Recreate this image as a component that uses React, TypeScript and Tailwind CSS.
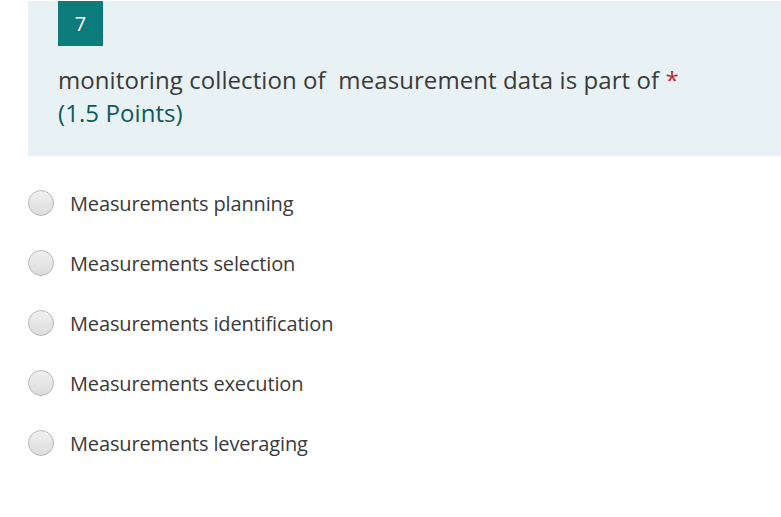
import React from "react";

const options = [
  "Measurements planning",
  "Measurements selection",
  "Measurements identification",
  "Measurements execution",
  "Measurements leveraging",
];

export default function App() {
  return (
    <div
      className="w-[781px] h-[517px] bg-white overflow-hidden"
      style={{ fontFamily: '"Open Sans", "Noto Sans", sans-serif' }}
    >
      <div className="ml-[28px] mt-[1px] h-[155px] bg-[#e8f1f4] pl-[30px]">
        <div className="w-[45px] h-[45px] bg-[#0c7b7b] text-white flex items-center justify-center text-[20px]">
          7
        </div>
        <div className="mt-[17px] text-[24px] leading-[33px] text-[#3a3a3a] tracking-[0.08px]">
          <div>
            monitoring collection of&nbsp; measurement data is part of{" "}
            <span className="text-[#c4262e]">*</span>
          </div>
          <div className="text-[#0d5a5c]">(1.5 Points)</div>
        </div>
      </div>
      <div className="ml-[28px] mt-[34px] flex flex-col gap-[34px]">
        {options.map((o) => (
          <div key={o} className="flex items-center h-[26px]">
            <div className="w-[26px] h-[26px] rounded-full border border-[#b9b9b9] bg-gradient-to-b from-[#f0f0f0] to-[#dcdcdc]" />
            <div className="ml-[16px] mt-[2px] text-[20px] text-[#3a3a3a] tracking-[-0.15px]">{o}</div>
          </div>
        ))}
      </div>
    </div>
  );
}
